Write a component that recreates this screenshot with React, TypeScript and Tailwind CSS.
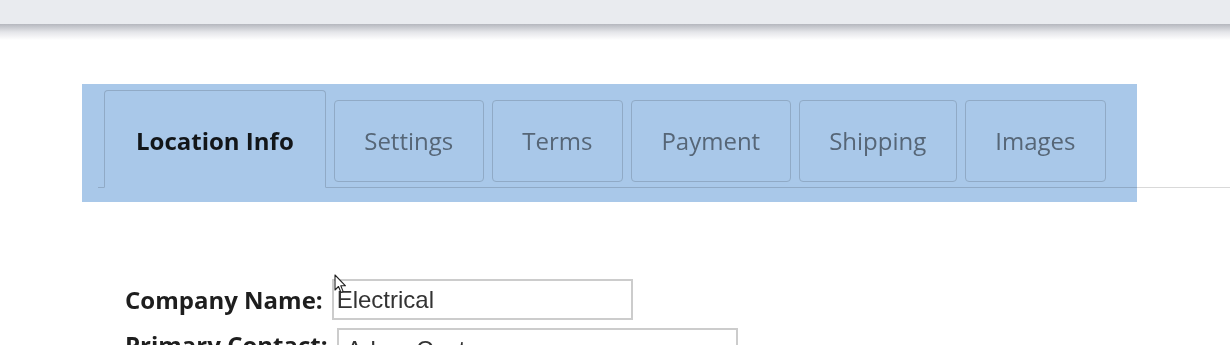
import React from 'react';

const tabs = ['Settings', 'Terms', 'Payment', 'Shipping', 'Images'];

export default function App() {
  return (
    <div className="relative w-[1230px] h-[345px] overflow-hidden bg-white" style={{ fontFamily: '"Open Sans", sans-serif' }}>
      {/* top toolbar with shadow */}
      <div className="h-[24px] bg-[#e9ebef]" />
      <div className="h-[16px] bg-gradient-to-b from-[#b5b7be] via-[#e4e5e9] to-white" />

      {/* tab strip */}
      <ul className="mt-[50px] ml-[98px] flex items-end border-b border-[#d9d9d9]">
        <li className="ml-[6px] -mb-px h-[98px] px-[31px] flex items-center justify-center bg-white border border-[#d9d9d9] border-b-white rounded-t-[4px] text-[24px] leading-[32px] font-bold text-[#1b1b1b]">
          <span className="pt-[4px]">Location Info</span>
        </li>
        {tabs.map((t) => (
          <li
            key={t}
            className="ml-[8px] mb-[5px] h-[82px] px-[29.5px] flex items-center justify-center border border-[#d9d9d9] rounded-[4px] text-[24px] leading-[32px] text-[#828282]"
          >
            {t}
          </li>
        ))}
      </ul>

      {/* form */}
      <div className="mt-[91px] ml-[125px] flex flex-col gap-[8px]">
        <div className="flex items-center gap-[9px]">
          <span className="text-[24px] leading-[34px] font-bold text-[#1e1e1e]">Company Name:</span>
          <div className="w-[301px] h-[41px] border-2 border-[#cccccc] flex items-center pl-[3px] text-[24px] text-[#333]" style={{ fontFamily: '"Liberation Sans", Arial, sans-serif' }}>
            Electrical
          </div>
        </div>
        <div className="flex items-start gap-[9px]">
          <span className="text-[24px] font-bold text-[#1e1e1e] leading-[34px]">Primary Contact:</span>
          <div className="w-[401px] h-[41px] border-2 border-[#cccccc] flex items-start justify-between pl-[8px] pr-[12px] pt-[2px] text-[24px] text-[#333]" style={{ fontFamily: '"Liberation Sans", Arial, sans-serif' }}>
            <span>Adam Caste</span>
            <span className="text-[14px] mt-[9px]">▼</span>
          </div>
        </div>
      </div>

      {/* selection highlight */}
      <div className="absolute left-[82px] top-[84px] w-[1055px] h-[118px] bg-[#a9c8e9] mix-blend-multiply" />

      {/* mouse cursor */}
      <svg className="absolute left-[334px] top-[274px]" width="13" height="20" viewBox="0 0 13 20">
        <path d="M1 1 L1 16 L4.5 12.5 L7 18.5 L9.2 17.6 L6.8 11.8 L11.5 11.8 Z" fill="white" stroke="#222" strokeWidth="1.1" strokeLinejoin="round" />
      </svg>
    </div>
  );
}
